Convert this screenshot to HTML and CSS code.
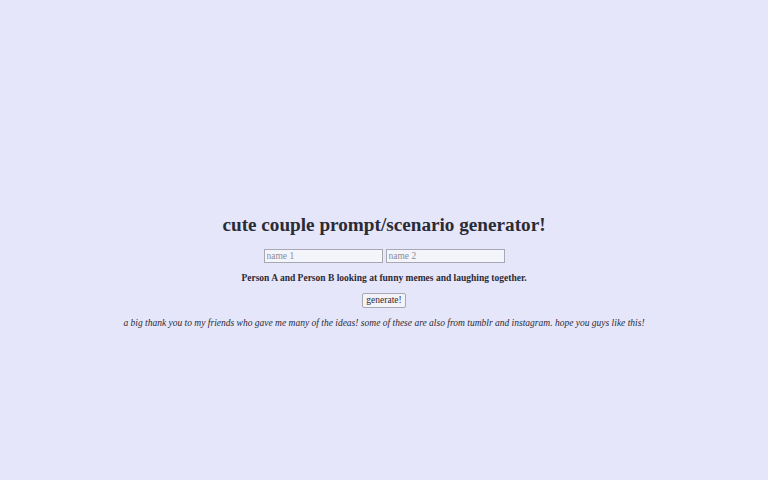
FILE: index.html
```html
<!DOCTYPE html>
<html>
<head>
<meta charset="utf-8">
<title>cute couple prompt/scenario generator!</title>
<link rel="stylesheet" href="styles.css">
</head>
<body>
<main class="page">
  <h1 class="title">cute couple prompt/scenario generator!</h1>
  <div class="names">
    <input class="name-input" type="text" placeholder="name 1">
    <input class="name-input" type="text" placeholder="name 2">
  </div>
  <p class="prompt">Person A and Person B looking at funny memes and laughing together.</p>
  <button class="generate" type="button">generate!</button>
  <p class="thanks">a big thank you to my friends who gave me many of the ideas! some of these are also from tumblr and instagram. hope you guys like this!</p>
</main>
</body>
</html>
```

FILE: styles.css
```css
html, body {
  margin: 0;
  padding: 0;
}

body {
  background: #e6e6fa;
  color: #2b2b35;
  font-family: "Liberation Serif", "Times New Roman", serif;
}

.page {
  min-height: 100vh;
  display: flex;
  flex-direction: column;
  align-items: center;
  justify-content: center;
  padding-top: 62px;
  box-sizing: border-box;
}

.title {
  font-size: 19.2px;
  font-weight: bold;
  margin: 0 0 13px;
}

.names {
  display: flex;
  gap: 3px;
}

.name-input {
  width: 119px;
  height: 14px;
  box-sizing: border-box;
  border: 1px solid #a8a8b4;
  background: #f4f4fb;
  font-family: "Liberation Serif", serif;
  font-size: 9.5px;
  padding: 0 2px;
  margin: 0;
}

.name-input::placeholder {
  color: #8c8c96;
}

.prompt {
  font-size: 9.5px;
  font-weight: bold;
  margin: 10px 0 10px;
}

.generate {
  font-family: "Liberation Serif", serif;
  font-size: 9.5px;
  color: #2b2b35;
  background: #f4f4f8;
  border: 1px solid #a8a8b4;
  border-radius: 2px;
  padding: 1px 3px;
  height: 15px;
  line-height: 11px;
}

.thanks {
  font-size: 9.5px;
  font-style: italic;
  margin: 10px 0 0;
}
```
